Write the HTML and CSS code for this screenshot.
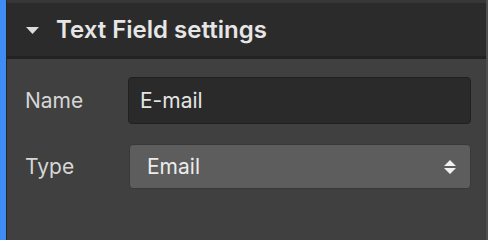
FILE: index.html
```html
<!DOCTYPE html>
<html lang="en">
<head>
<meta charset="utf-8">
<title>Text Field settings</title>
<link rel="stylesheet" href="styles.css">
</head>
<body>
<div class="app">
  <div class="accent"></div>
  <div class="edge"></div>
  <section class="panel">
    <div class="top-strip"></div>
    <header class="header">
      <svg class="caret" width="13" height="7" viewBox="0 0 13 7" aria-hidden="true"><path d="M0 0H13L6.5 7Z" fill="#dcdcdc"/></svg>
      <span class="title">Text Field settings</span>
    </header>
    <div class="body">
      <div class="row">
        <span class="label">Name</span>
        <div class="field input">E-mail</div>
      </div>
      <div class="row">
        <span class="label">Type</span>
        <div class="field select">
          <span>Email</span>
          <svg class="arrows" width="12" height="14" viewBox="0 0 12 14" aria-hidden="true"><path d="M6 0L12 6H0Z M0 8H12L6 14Z" fill="#f0f0f0"/></svg>
        </div>
      </div>
    </div>
  </section>
  <div class="scroll"></div>
</div>
</body>
</html>
```
FILE: styles.css
```css
html, body {
  margin: 0;
  padding: 0;
}
body {
  width: 488px;
  overflow: hidden;
  background: #404040;
  font-family: Inter, "Noto Sans", sans-serif;
  color: #e2e2e2;
}
.app {
  display: flex;
  height: 100vh;
  min-height: 210px;
}
.accent {
  width: 6px;
  background: #3f8cf4;
}
.edge {
  width: 1px;
  background: #262626;
}
.panel {
  flex: 1;
  display: flex;
  flex-direction: column;
  background: #404040;
}
.scroll {
  width: 2px;
  background: #4e4e4e;
}
.top-strip {
  height: 3px;
  background: #373737;
}
.header {
  height: 53px;
  background: #2b2b2b;
  border-bottom: 3px solid #222222;
  display: flex;
  align-items: center;
  padding-left: 19px;
  gap: 17px;
}
.caret {
  display: block;
  margin-top: 1px;
}
.title {
  font-size: 24px;
  font-weight: 600;
  color: #e6e6e6;
}
.body {
  padding: 18px 0 0 18px;
  display: flex;
  flex-direction: column;
  gap: 20px;
}
.row {
  display: flex;
  align-items: center;
}
.label {
  width: 103px;
  font-size: 21px;
  color: #d6d6d6;
}
.field {
  box-sizing: border-box;
  width: 343px;
  border-radius: 4px;
  font-size: 21px;
  display: flex;
  align-items: center;
}
.input {
  height: 47px;
  background: #2a2a2a;
  border: 1px solid #202020;
  padding-left: 11px;
  color: #e4e4e4;
}
.select {
  height: 45px;
  margin-left: 1px;
  width: 342px;
  background: #5d5d5d;
  border: 1px solid #383838;
  padding-left: 17px;
  padding-right: 14px;
  justify-content: space-between;
  color: #ececec;
}
.arrows {
  display: block;
}
```
